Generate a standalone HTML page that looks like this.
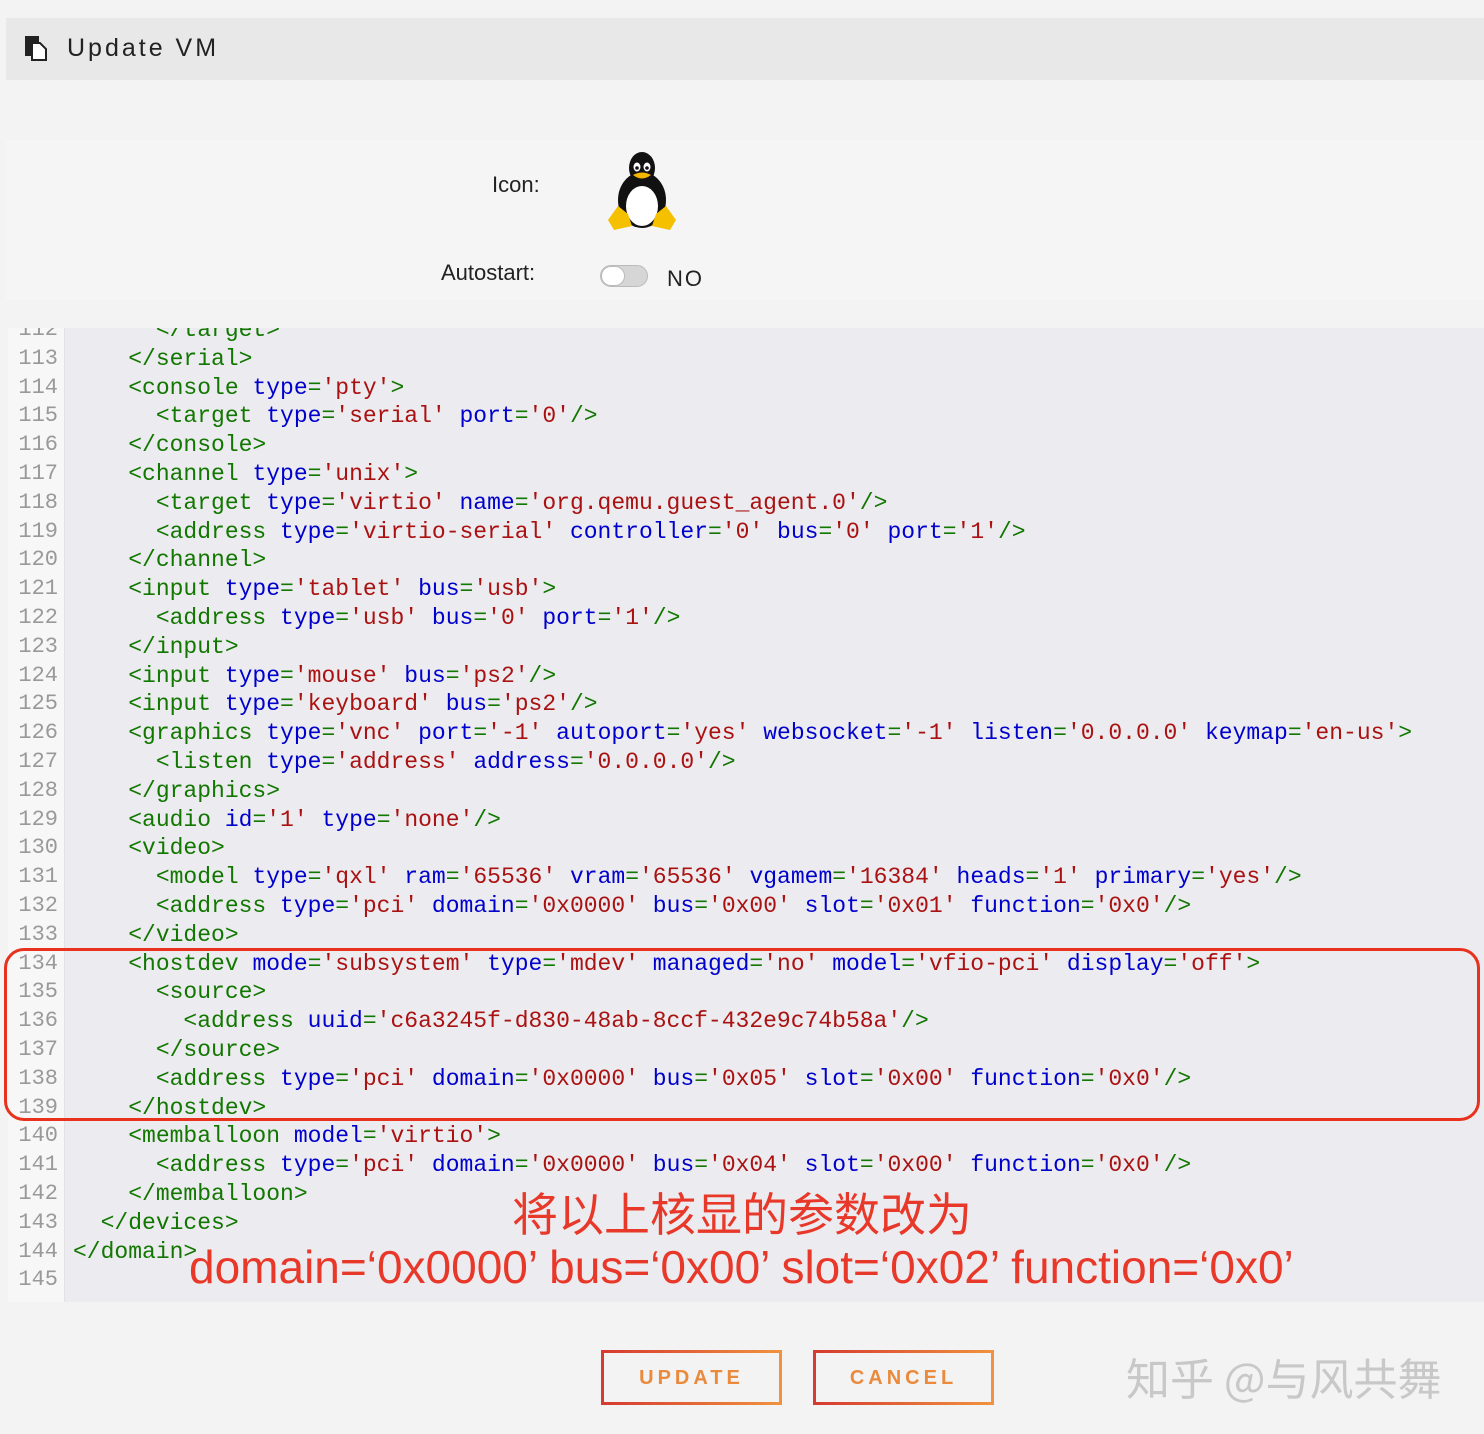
<!DOCTYPE html>
<html><head><meta charset="utf-8"><style>
body{margin:0;width:1484px;height:1434px;background:#f3f3f3;position:relative;overflow:hidden;font-family:"Liberation Sans","Noto Sans CJK SC",sans-serif}
.hdr{position:absolute;left:6px;top:18px;width:1478px;height:62px;background:#e8e8e8}
.hdr span{position:absolute;left:61px;top:16px;font-size:25px;letter-spacing:3px;color:#222}
.form{position:absolute;left:6px;top:140px;width:1478px;height:160px;background:#f5f5f5}
.lbl{position:absolute;font-size:22px;color:#222}
.code{position:absolute;left:8px;top:328px;width:1476px;height:974px;background:#ecebef;overflow:hidden}
.gut{position:absolute;left:0;top:0;width:56px;height:974px;background:#f7f7f7;border-right:1px solid #e2e2e2}
.in{position:absolute;left:0;top:2px;width:1476px;height:1000px}
.ln{position:absolute;left:0;width:50px;text-align:right;font:22px/28.8px "Liberation Mono",monospace;color:#999}
.cl{position:absolute;left:65px;white-space:pre;font:23px/28.8px "Liberation Mono",monospace;color:#170}
.a{color:#00c}.s{color:#a11}
.box{position:absolute;left:4px;top:948px;width:1470px;height:167px;border:3px solid #e8321e;border-radius:20px}
.btn{position:absolute;top:1350px;width:181px;height:55px;box-sizing:border-box;border:3px solid;border-image:linear-gradient(90deg,#d63a30,#f0923e) 1;font-size:20px;font-weight:bold;letter-spacing:4px;color:#ea8a3c;text-align:center;line-height:50px}
</style></head><body>
<div class="hdr">
<svg style="position:absolute;left:17px;top:16px" width="26" height="28" viewBox="0 0 26 28"><rect x="2" y="2" width="14" height="20" fill="#222"/><path d="M9 9h8l6 6v11H9z" fill="#fff" stroke="#222" stroke-width="2"/></svg>
<span>Update VM</span></div>
<div class="form"></div>
<div class="lbl" style="left:492px;top:172px">Icon:</div>
<div class="lbl" style="left:441px;top:260px">Autostart:</div>
<svg style="position:absolute;left:604px;top:150px" width="76" height="82" viewBox="0 0 76 82">
<ellipse cx="38" cy="50" rx="24" ry="28" fill="#111"/><ellipse cx="38" cy="18" rx="13" ry="16" fill="#111"/>
<ellipse cx="38" cy="56" rx="16" ry="20" fill="#fff"/>
<ellipse cx="33" cy="17" rx="3.5" ry="4.5" fill="#fff"/><ellipse cx="43" cy="17" rx="3.5" ry="4.5" fill="#fff"/>
<circle cx="33" cy="18" r="1.8" fill="#111"/><circle cx="43" cy="18" r="1.8" fill="#111"/>
<path d="M29 25 Q38 20 47 25 Q38 32 29 25z" fill="#f2b500"/>
<path d="M4 70 L14 56 L24 64 L28 76 L10 80z" fill="#f5c000"/><path d="M72 70 L62 56 L52 64 L48 76 L66 80z" fill="#f5c000"/></svg>
<div style="position:absolute;left:600px;top:265px;width:48px;height:22px;border-radius:12px;background:#d6d6d6;border:1px solid #bbb;box-sizing:border-box"><div style="width:24px;height:20px;border-radius:10px;background:#fff;border:1px solid #bbb;box-sizing:border-box"></div></div>
<div class="lbl" style="left:667px;top:266px;letter-spacing:2px">NO</div>
<div class="code"><div class="gut"></div><div class="in">
<div class="ln" style="top:-14px">112</div><div class="cl" style="top:-14px">      &lt;/target&gt;</div>
<div class="ln" style="top:14.8px">113</div><div class="cl" style="top:14.8px">    &lt;/serial&gt;</div>
<div class="ln" style="top:43.6px">114</div><div class="cl" style="top:43.6px">    &lt;console <span class="a">type</span>=<span class="s">'pty'</span>&gt;</div>
<div class="ln" style="top:72.4px">115</div><div class="cl" style="top:72.4px">      &lt;target <span class="a">type</span>=<span class="s">'serial'</span> <span class="a">port</span>=<span class="s">'0'</span>/&gt;</div>
<div class="ln" style="top:101.2px">116</div><div class="cl" style="top:101.2px">    &lt;/console&gt;</div>
<div class="ln" style="top:130px">117</div><div class="cl" style="top:130px">    &lt;channel <span class="a">type</span>=<span class="s">'unix'</span>&gt;</div>
<div class="ln" style="top:158.8px">118</div><div class="cl" style="top:158.8px">      &lt;target <span class="a">type</span>=<span class="s">'virtio'</span> <span class="a">name</span>=<span class="s">'org.qemu.guest_agent.0'</span>/&gt;</div>
<div class="ln" style="top:187.6px">119</div><div class="cl" style="top:187.6px">      &lt;address <span class="a">type</span>=<span class="s">'virtio-serial'</span> <span class="a">controller</span>=<span class="s">'0'</span> <span class="a">bus</span>=<span class="s">'0'</span> <span class="a">port</span>=<span class="s">'1'</span>/&gt;</div>
<div class="ln" style="top:216.4px">120</div><div class="cl" style="top:216.4px">    &lt;/channel&gt;</div>
<div class="ln" style="top:245.2px">121</div><div class="cl" style="top:245.2px">    &lt;input <span class="a">type</span>=<span class="s">'tablet'</span> <span class="a">bus</span>=<span class="s">'usb'</span>&gt;</div>
<div class="ln" style="top:274px">122</div><div class="cl" style="top:274px">      &lt;address <span class="a">type</span>=<span class="s">'usb'</span> <span class="a">bus</span>=<span class="s">'0'</span> <span class="a">port</span>=<span class="s">'1'</span>/&gt;</div>
<div class="ln" style="top:302.8px">123</div><div class="cl" style="top:302.8px">    &lt;/input&gt;</div>
<div class="ln" style="top:331.6px">124</div><div class="cl" style="top:331.6px">    &lt;input <span class="a">type</span>=<span class="s">'mouse'</span> <span class="a">bus</span>=<span class="s">'ps2'</span>/&gt;</div>
<div class="ln" style="top:360.4px">125</div><div class="cl" style="top:360.4px">    &lt;input <span class="a">type</span>=<span class="s">'keyboard'</span> <span class="a">bus</span>=<span class="s">'ps2'</span>/&gt;</div>
<div class="ln" style="top:389.2px">126</div><div class="cl" style="top:389.2px">    &lt;graphics <span class="a">type</span>=<span class="s">'vnc'</span> <span class="a">port</span>=<span class="s">'-1'</span> <span class="a">autoport</span>=<span class="s">'yes'</span> <span class="a">websocket</span>=<span class="s">'-1'</span> <span class="a">listen</span>=<span class="s">'0.0.0.0'</span> <span class="a">keymap</span>=<span class="s">'en-us'</span>&gt;</div>
<div class="ln" style="top:418px">127</div><div class="cl" style="top:418px">      &lt;listen <span class="a">type</span>=<span class="s">'address'</span> <span class="a">address</span>=<span class="s">'0.0.0.0'</span>/&gt;</div>
<div class="ln" style="top:446.8px">128</div><div class="cl" style="top:446.8px">    &lt;/graphics&gt;</div>
<div class="ln" style="top:475.6px">129</div><div class="cl" style="top:475.6px">    &lt;audio <span class="a">id</span>=<span class="s">'1'</span> <span class="a">type</span>=<span class="s">'none'</span>/&gt;</div>
<div class="ln" style="top:504.4px">130</div><div class="cl" style="top:504.4px">    &lt;video&gt;</div>
<div class="ln" style="top:533.2px">131</div><div class="cl" style="top:533.2px">      &lt;model <span class="a">type</span>=<span class="s">'qxl'</span> <span class="a">ram</span>=<span class="s">'65536'</span> <span class="a">vram</span>=<span class="s">'65536'</span> <span class="a">vgamem</span>=<span class="s">'16384'</span> <span class="a">heads</span>=<span class="s">'1'</span> <span class="a">primary</span>=<span class="s">'yes'</span>/&gt;</div>
<div class="ln" style="top:562px">132</div><div class="cl" style="top:562px">      &lt;address <span class="a">type</span>=<span class="s">'pci'</span> <span class="a">domain</span>=<span class="s">'0x0000'</span> <span class="a">bus</span>=<span class="s">'0x00'</span> <span class="a">slot</span>=<span class="s">'0x01'</span> <span class="a">function</span>=<span class="s">'0x0'</span>/&gt;</div>
<div class="ln" style="top:590.8px">133</div><div class="cl" style="top:590.8px">    &lt;/video&gt;</div>
<div class="ln" style="top:619.6px">134</div><div class="cl" style="top:619.6px">    &lt;hostdev <span class="a">mode</span>=<span class="s">'subsystem'</span> <span class="a">type</span>=<span class="s">'mdev'</span> <span class="a">managed</span>=<span class="s">'no'</span> <span class="a">model</span>=<span class="s">'vfio-pci'</span> <span class="a">display</span>=<span class="s">'off'</span>&gt;</div>
<div class="ln" style="top:648.4px">135</div><div class="cl" style="top:648.4px">      &lt;source&gt;</div>
<div class="ln" style="top:677.2px">136</div><div class="cl" style="top:677.2px">        &lt;address <span class="a">uuid</span>=<span class="s">'c6a3245f-d830-48ab-8ccf-432e9c74b58a'</span>/&gt;</div>
<div class="ln" style="top:706px">137</div><div class="cl" style="top:706px">      &lt;/source&gt;</div>
<div class="ln" style="top:734.8px">138</div><div class="cl" style="top:734.8px">      &lt;address <span class="a">type</span>=<span class="s">'pci'</span> <span class="a">domain</span>=<span class="s">'0x0000'</span> <span class="a">bus</span>=<span class="s">'0x05'</span> <span class="a">slot</span>=<span class="s">'0x00'</span> <span class="a">function</span>=<span class="s">'0x0'</span>/&gt;</div>
<div class="ln" style="top:763.6px">139</div><div class="cl" style="top:763.6px">    &lt;/hostdev&gt;</div>
<div class="ln" style="top:792.4px">140</div><div class="cl" style="top:792.4px">    &lt;memballoon <span class="a">model</span>=<span class="s">'virtio'</span>&gt;</div>
<div class="ln" style="top:821.2px">141</div><div class="cl" style="top:821.2px">      &lt;address <span class="a">type</span>=<span class="s">'pci'</span> <span class="a">domain</span>=<span class="s">'0x0000'</span> <span class="a">bus</span>=<span class="s">'0x04'</span> <span class="a">slot</span>=<span class="s">'0x00'</span> <span class="a">function</span>=<span class="s">'0x0'</span>/&gt;</div>
<div class="ln" style="top:850px">142</div><div class="cl" style="top:850px">    &lt;/memballoon&gt;</div>
<div class="ln" style="top:878.8px">143</div><div class="cl" style="top:878.8px">  &lt;/devices&gt;</div>
<div class="ln" style="top:907.6px">144</div><div class="cl" style="top:907.6px">&lt;/domain&gt;</div>
<div class="ln" style="top:936.4px">145</div>
</div></div>
<div class="box"></div>
<div style="position:absolute;left:512px;top:1183px;font-size:46px;color:#e8382a;font-family:'Noto Sans CJK SC',sans-serif;line-height:58px;white-space:nowrap">将以上核显的参数改为</div>
<div style="position:absolute;left:189px;top:1240px;font-size:46px;color:#e8382a;letter-spacing:0;line-height:54px;white-space:nowrap">domain=‘0x0000’ bus=‘0x00’ slot=‘0x02’ function=‘0x0’</div>
<div class="btn" style="left:601px">UPDATE</div>
<div class="btn" style="left:813px">CANCEL</div>
<div style="position:absolute;left:1126px;top:1344px;font-size:44px;color:#c8c8c8;font-family:'Noto Sans CJK SC',sans-serif;white-space:nowrap">知乎 @与风共舞</div>
</body></html>
